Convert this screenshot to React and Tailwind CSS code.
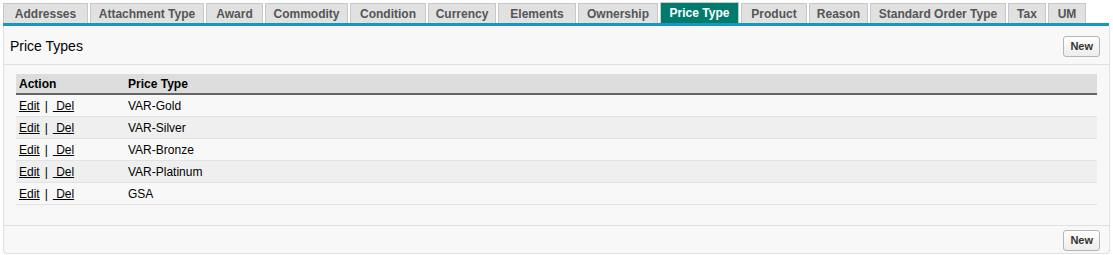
const TABS = [
  { label: "Addresses", w: "w-[85px]" },
  { label: "Attachment Type", w: "w-[114px]" },
  { label: "Award", w: "w-[57px]" },
  { label: "Commodity", w: "w-[83px]" },
  { label: "Condition", w: "w-[76px]" },
  { label: "Currency", w: "w-[68px]" },
  { label: "Elements", w: "w-[78px]" },
  { label: "Ownership", w: "w-[80px]" },
  { label: "Price Type", w: "w-[79px]", active: true },
  { label: "Product", w: "w-[66px]" },
  { label: "Reason", w: "w-[59px]" },
  { label: "Standard Order Type", w: "w-[136px]" },
  { label: "Tax", w: "w-[38px]" },
  { label: "UM", w: "w-[38px]" },
];

const ROWS = ["VAR-Gold", "VAR-Silver", "VAR-Bronze", "VAR-Platinum", "GSA"];

function NewButton() {
  return (
    <button className="h-[21px] px-[6px] rounded-[3px] border border-[#b5b5b5] bg-gradient-to-b from-white to-[#ededed] text-[11px] font-bold text-[#333] leading-none">
      New
    </button>
  );
}

export default function App() {
  return (
    <div className="w-[1113px] h-[255px] bg-white pt-[2px] px-[3px]" style={{ fontFamily: '"Liberation Sans", Arial, sans-serif' }}>
      {/* Tabs */}
      <div className="flex items-end gap-[2px] h-[21px]">
        {TABS.map((t) =>
          t.active ? (
            <div key={t.label} className={`${t.w} shrink-0 whitespace-nowrap h-[21px] flex items-center justify-center bg-[#017b6c] border border-[#c8c8c8] border-b-0 text-white text-[12px] font-bold`}>
              {t.label}
            </div>
          ) : (
            <div key={t.label} className={`${t.w} shrink-0 whitespace-nowrap h-[20px] pt-[1px] flex items-center justify-center bg-[#e1e1e1] border border-[#c8c8c8] border-b-0 text-[#555] text-[12px] font-bold`}>
              {t.label}
            </div>
          )
        )}
      </div>
      <div className="h-[3px] w-[1106px] bg-[#1797c0]" />

      {/* Panel */}
      <div className="w-[1107px] h-[228px] bg-[#f8f8f8] border border-t-0 border-[#e0e0e0] rounded-b-[4px] flex flex-col">
        <div className="h-[39px] flex items-center justify-between pl-[6px] pr-[9px] border-b border-[#e0e0e0] pt-[2px]">
          <span className="text-[14px] text-black">Price Types</span>
          <NewButton />
        </div>

        <div className="px-[12px] pt-[9px] h-[161px] border-b border-[#e0e0e0]">
          <table className="w-full border-collapse text-[12px] text-black">
            <thead>
              <tr className="bg-[#dddddd] border-b-2 border-[#666]">
                <th className="h-[20px] w-[112px] text-left pl-[3px] font-bold">Action</th>
                <th className="text-left font-bold">Price Type</th>
              </tr>
            </thead>
            <tbody>
              {ROWS.map((r, i) => (
                <tr key={r} className={`border-b border-[#e3e3e3] ${i % 2 === 1 ? "bg-[#efefef]" : ""}`}>
                  <td className="h-[22px] pl-[3px] pt-[1px]">
                    <a className="underline text-black cursor-pointer">Edit</a>
                    <span className="px-[5px]">|</span>
                    <a className="underline text-black cursor-pointer">&nbsp;Del</a>
                  </td>
                  <td className="pt-[1px]">{r}</td>
                </tr>
              ))}
            </tbody>
          </table>
        </div>

        <div className="flex-1 flex items-center justify-end pr-[9px] pt-[2px]">
          <NewButton />
        </div>
      </div>
    </div>
  );
}
